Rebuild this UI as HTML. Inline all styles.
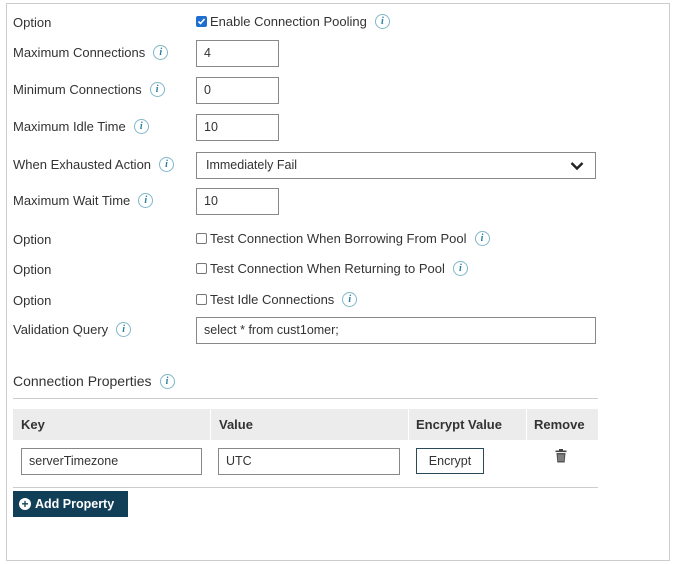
<!DOCTYPE html>
<html><head><style>
*{box-sizing:border-box;margin:0;padding:0}
body{width:677px;height:564px;background:#fff;font-family:"Liberation Sans",sans-serif;font-size:13px;color:#333;position:relative;overflow:hidden}
.frame{position:absolute;left:6px;top:3px;width:664px;height:558px;border:1px solid #ccc}
.a{position:absolute;white-space:nowrap;line-height:14px}
.i{display:inline-block;width:15px;height:15px;border:1px solid #7fb8c8;border-radius:50%;color:#2a7f9a;font:italic bold 10px "Liberation Serif",serif;text-align:center;line-height:13px;vertical-align:middle;margin-left:8px;margin-top:-2px}
.in{position:absolute;border:1px solid #888;height:27px;padding-left:7px;line-height:25px;font-size:12.5px;background:#fff}
.cb{display:inline-block;width:11px;height:11px;border:1px solid #777;border-radius:2px;vertical-align:middle;margin-right:3px;margin-top:-2px}
.cbc{background:#1f6fd0;border-color:#1f6fd0;position:relative}
.hl{position:absolute;height:1px;background:#ccc}
</style></head><body>
<div class="frame"></div>
<div class="a" style="left:13px;top:16px">Option</div>
<div class="a" style="left:196px;top:15px"><span class="cb cbc"><svg width="9" height="9" viewBox="0 0 9 9" style="position:absolute;left:0;top:0"><path d="M1.5 4.5l2 2 4-4.5" stroke="#fff" stroke-width="1.6" fill="none"/></svg></span>Enable Connection Pooling<span class="i">i</span></div>

<div class="a" style="left:13px;top:46px">Maximum Connections<span class="i">i</span></div>
<div class="in" style="left:196px;top:40px;width:83px">4</div>
<div class="a" style="left:13px;top:83px">Minimum Connections<span class="i">i</span></div>
<div class="in" style="left:196px;top:77px;width:83px">0</div>
<div class="a" style="left:13px;top:120px">Maximum Idle Time<span class="i">i</span></div>
<div class="in" style="left:196px;top:114px;width:83px">10</div>
<div class="a" style="left:13px;top:158px">When Exhausted Action<span class="i">i</span></div>
<div class="in" style="left:196px;top:152px;width:400px;padding-left:9px">Immediately Fail<svg style="position:absolute;right:11px;top:8px" width="14" height="10" viewBox="0 0 14 10"><path d="M1.5 2l5.5 5.5 5.5-5.5" stroke="#222" stroke-width="2.4" fill="none"/></svg></div>
<div class="a" style="left:13px;top:194px">Maximum Wait Time<span class="i">i</span></div>
<div class="in" style="left:196px;top:188px;width:83px">10</div>

<div class="a" style="left:13px;top:233px">Option</div>
<div class="a" style="left:196px;top:232px"><span class="cb"></span>Test Connection When Borrowing From Pool<span class="i">i</span></div>
<div class="a" style="left:13px;top:263px">Option</div>
<div class="a" style="left:196px;top:262px"><span class="cb"></span>Test Connection When Returning to Pool<span class="i">i</span></div>
<div class="a" style="left:13px;top:294px">Option</div>
<div class="a" style="left:196px;top:293px"><span class="cb"></span>Test Idle Connections<span class="i">i</span></div>
<div class="a" style="left:13px;top:323px">Validation Query<span class="i">i</span></div>
<div class="in" style="left:196px;top:317px;width:400px">select * from cust1omer;</div>

<div class="a" style="left:13px;top:374px;font-size:14px">Connection Properties<span class="i">i</span></div>
<div class="hl" style="left:13px;top:398px;width:585px"></div>
<div style="position:absolute;left:13px;top:409px;width:585px;height:31px;background:#ececec"></div>
<div class="a" style="left:21px;top:418px;font-weight:bold">Key</div>
<div class="a" style="left:219px;top:418px;font-weight:bold">Value</div>
<div class="a" style="left:416px;top:418px;font-weight:bold">Encrypt Value</div>
<div class="a" style="left:534px;top:418px;font-weight:bold">Remove</div>
<div style="position:absolute;left:210px;top:409px;width:1px;height:31px;background:#fff"></div>
<div style="position:absolute;left:408px;top:409px;width:1px;height:31px;background:#fff"></div>
<div style="position:absolute;left:526px;top:409px;width:1px;height:31px;background:#fff"></div>
<div class="in" style="left:21px;top:448px;width:181px;height:27px">serverTimezone</div>
<div class="in" style="left:218px;top:448px;width:182px;height:27px">UTC</div>
<div class="in" style="left:416px;top:448px;width:68px;height:26px;border-color:#2a4a5a;text-align:center;padding:0;line-height:24px">Encrypt</div>
<svg style="position:absolute;left:555px;top:449px" width="12" height="14" viewBox="0 0 12 14"><rect x="0.5" y="1.5" width="11" height="1.6" fill="#444"/><rect x="4" y="0" width="4" height="2" fill="#444"/><path d="M1.5 4h9l-0.8 9.5h-7.4z" fill="#555"/><path d="M4 5.5v6.5M6 5.5v6.5M8 5.5v6.5" stroke="#ccc" stroke-width="0.7"/></svg>
<div class="hl" style="left:13px;top:487px;width:585px"></div>
<div style="position:absolute;left:13px;top:491px;width:115px;height:26px;background:#123f58;color:#fff;font-weight:bold;line-height:26px;padding-left:6px;white-space:nowrap;font-size:12.5px"><span style="display:inline-block;width:12px;height:12px;border-radius:50%;background:#fff;color:#123f58;font-size:12px;line-height:12px;text-align:center;vertical-align:middle;margin-top:-2px;margin-right:4px">+</span>Add Property</div>
</body></html>
